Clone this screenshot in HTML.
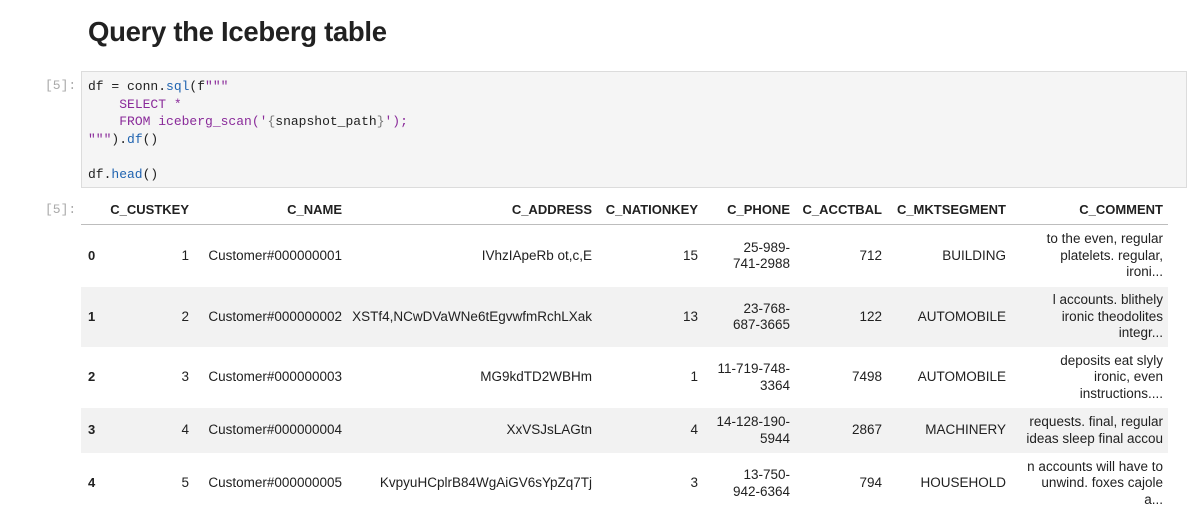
<!DOCTYPE html>
<html><head><meta charset="utf-8"><style>
body{margin:0;width:1200px;height:522px;background:#fff;position:relative;overflow:hidden;font-family:"Liberation Sans",sans-serif;color:#212121}
.a{position:absolute}
h1{position:absolute;left:88px;top:16px;margin:0;font-size:27.5px;font-weight:bold;letter-spacing:-0.3px;color:#212121}
.prompt{position:absolute;font-family:"Liberation Mono",monospace;font-size:13px;color:#aaa}
.code{position:absolute;left:81px;top:71px;width:1106px;height:117px;background:#f5f5f5;border:1px solid #dcdcdc;box-sizing:border-box}
.code pre{margin:0;position:absolute;left:6px;top:6px;font-family:"Liberation Mono",monospace;font-size:13px;line-height:17.5px;color:#212121}
.k{color:#8a2b9a}.f{color:#1f63b0}.g{color:#777}
.row{position:absolute;left:81px;width:1087px}
.c{position:absolute;font-size:13.5px;text-align:right;line-height:16.5px;display:flex;align-items:center;justify-content:flex-end}
.h{font-weight:bold;font-size:13px}
</style></head><body>
<h1>Query the Iceberg table</h1>
<div class="prompt" style="left:45px;top:78px">[5]:</div>
<div class="code"><pre>df = conn.<span class="f">sql</span>(f<span class="k">"""</span>
    <span class="k">SELECT *</span>
    <span class="k">FROM iceberg_scan('</span><span class="g">{</span>snapshot_path<span class="g">}</span><span class="k">');</span>
<span class="k">"""</span>).<span class="f">df</span>()

df.<span class="f">head</span>()</pre></div>
<div class="prompt" style="left:45px;top:202px">[5]:</div>
<div class="a" style="left:81px;top:224px;width:1087px;height:1px;background:#bdbdbd"></div>
<div class="row" style="top:287px;height:60px;background:#f2f2f2"></div>
<div class="row" style="top:408px;height:45px;background:#f2f2f2"></div>
<div id="t"></div>
<script>
var R=[189,342,592,698,790,882,1006,1163];
var W=[100,150,250,100,80,90,120,140];
var H=["C_CUSTKEY","C_NAME","C_ADDRESS","C_NATIONKEY","C_PHONE","C_ACCTBAL","C_MKTSEGMENT","C_COMMENT"];
var rows=[[226,60,["1","Customer#000000001","IVhzIApeRb ot,c,E","15","25-989-<br>741-2988","712","BUILDING","to the even, regular<br>platelets. regular,<br>ironi..."]],
[287,60,["2","Customer#000000002","XSTf4,NCwDVaWNe6tEgvwfmRchLXak","13","23-768-<br>687-3665","122","AUTOMOBILE","l accounts. blithely<br>ironic theodolites<br>integr..."]],
[347,61,["3","Customer#000000003","MG9kdTD2WBHm","1","11-719-748-<br>3364","7498","AUTOMOBILE","deposits eat slyly<br>ironic, even<br>instructions...."]],
[408,45,["4","Customer#000000004","XxVSJsLAGtn","4","14-128-190-<br>5944","2867","MACHINERY","requests. final, regular<br>ideas sleep final accou"]],
[453,61,["5","Customer#000000005","KvpyuHCplrB84WgAiGV6sYpZq7Tj","3","13-750-<br>942-6364","794","HOUSEHOLD","n accounts will have to<br>unwind. foxes cajole<br>a..."]]];
var s="";
for(var i=0;i<8;i++){s+='<div class="c h" style="left:'+(R[i]-W[i])+'px;width:'+W[i]+'px;top:200px;height:20px">'+H[i]+'</div>';}
rows.forEach(function(r,j){
 s+='<div class="c h" style="left:88px;width:20px;justify-content:flex-start;top:'+r[0]+'px;height:'+r[1]+'px">'+j+'</div>';
 for(var i=0;i<8;i++){s+='<div class="c" style="left:'+(R[i]-W[i]-(i==2?50:0)-(i==7?20:0))+'px;width:'+(W[i]+(i==2?50:0)+(i==7?20:0))+'px;top:'+r[0]+'px;height:'+r[1]+'px">'+r[2][i]+'</div>';}
});
document.getElementById("t").innerHTML=s;
</script>
</body></html>
